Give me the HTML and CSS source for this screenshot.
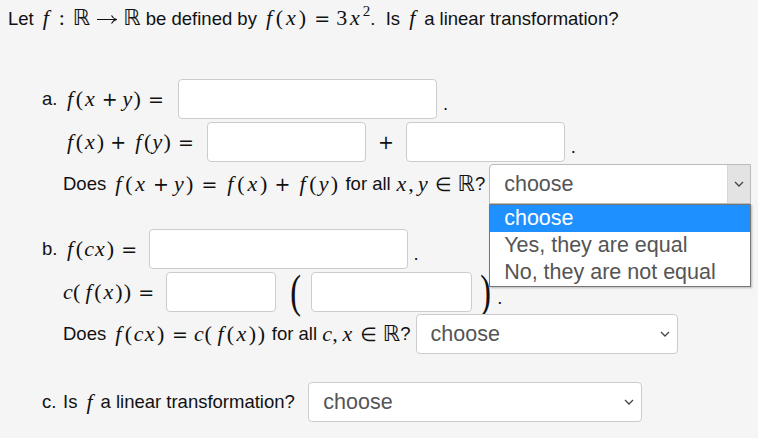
FILE: index.html
```html
<!DOCTYPE html>
<html lang="en">
  <head>
    <meta charset="UTF-8" />
    <title>Linear transformation</title>
    <link rel="stylesheet" href="styles.css">
  </head>
  <body>
    <p class="intro">
      Let&nbsp;<span class="m"><i class="f">f</i><span class="rel colon">:</span><span class="bb">ℝ</span><svg class="arr" width="20" height="10" viewBox="0 0 20 10" aria-label="→"><path d="M0 5.5 H18.5 M14.5 1.5 Q16 4.5 19.5 5.5 Q16 6.5 14.5 9.5" fill="none" stroke="#111" stroke-width="1.1"/></svg><span class="bb">ℝ</span></span>&nbsp;be defined by&nbsp;<span class="m wide"><i class="f">f</i>(<i>x</i>)<span class="rel">=</span>3<i>x</i><sup>2</sup></span>.&nbsp; Is&nbsp;<span class="m wide"><i class="f">f</i></span>&nbsp;a linear transformation?
    </p>

    <!-- part a -->
    <div class="part part-a">
      <div class="label">a.</div>
      <div class="lines">
        <div class="row">
          <span class="m"><i class="f">f</i>(<i>x</i><span class="bin">+</span><i class="y">y</i>)<span class="rel">=</span></span>
          <span class="box w-259 gap-a1"></span><span class="dot">.</span>
        </div>
        <div class="row">
          <span class="m"><i class="f">f</i>(<i>x</i>)<span class="bin">+</span><i class="f">f</i>(<i class="y">y</i>)<span class="rel">=</span></span>
          <span class="box w-159 gap-a2"></span>
          <span class="m bin plus">+</span>
          <span class="box w-159"></span><span class="dot">.</span>
        </div>
        <div class="row">
          Does&nbsp;<span class="m wide"><i class="f">f</i>(<i>x</i><span class="bin">+</span><i class="y">y</i>)<span class="rel">=</span><i class="f">f</i>(<i>x</i>)<span class="bin">+</span><i class="f">f</i>(<i class="y">y</i>)</span>&nbsp;for all&nbsp;<span class="m"><i>x</i><span class="comma">,</span><i class="y">y</i><span class="rel">∈</span><span class="bb">ℝ</span></span>?
          <div class="select open w-262 gap-s1">
            <span class="select-text">choose</span>
            <span class="arrow">
              <svg width="10" height="6" viewBox="0 0 10 6"><path d="M1 1 L5 5 L9 1" fill="none" stroke="#444" stroke-width="1.3"/></svg>
            </span>
            <ul class="options">
              <li class="picked">choose</li>
              <li>Yes, they are equal</li>
              <li>No, they are not equal</li>
            </ul>
          </div>
        </div>
      </div>
    </div>

    <!-- part b -->
    <div class="part part-b">
      <div class="label">b.</div>
      <div class="lines">
        <div class="row">
          <span class="m"><i class="f">f</i>(<i class="c">c</i><i>x</i>)<span class="rel">=</span></span>
          <span class="box w-259 gap-b1"></span><span class="dot">.</span>
        </div>
        <div class="row">
          <span class="m"><i class="c">c</i>(<i class="f">f</i>(<i>x</i>))<span class="rel">=</span></span>
          <span class="box w-110 gap-b2"></span>
          <span class="paren left">(</span>
          <span class="box w-161"></span>
          <span class="paren right">)</span><span class="dot low">.</span>
        </div>
        <div class="row">
          Does&nbsp;<span class="m wider"><i class="f">f</i>(<i class="c">c</i><i>x</i>)<span class="rel">=</span><i class="c">c</i>(<i class="f">f</i>(<i>x</i>))</span>&nbsp;for all&nbsp;<span class="m"><i class="c">c</i><span class="comma">,</span><i>x</i><span class="rel">∈</span><span class="bb">ℝ</span></span>?
          <div class="select w-262 gap-s2">
            <span class="select-text">choose</span>
            <span class="arrow">
              <svg width="10" height="6" viewBox="0 0 10 6"><path d="M1 1 L5 5 L9 1" fill="none" stroke="#444" stroke-width="1.3"/></svg>
            </span>
          </div>
        </div>
      </div>
    </div>

    <!-- part c -->
    <div class="part part-c">
      <div class="label">c.</div>
      <div class="lines">
        <div class="row">
          Is&nbsp;<span class="m"><i class="f">f</i></span>&nbsp;a linear transformation?
          <div class="select w-334 gap-s3">
            <span class="select-text">choose</span>
            <span class="arrow">
              <svg width="10" height="6" viewBox="0 0 10 6"><path d="M1 1 L5 5 L9 1" fill="none" stroke="#444" stroke-width="1.3"/></svg>
            </span>
          </div>
        </div>
      </div>
    </div>
  </body>
</html>
```

FILE: styles.css
```css
body {
  margin: 0;
  padding: 0;
  background-color: #f5f5f5;
  font-family: "Liberation Sans", Arial, sans-serif;
  font-size: 18.5px;
  color: #111;
}

.intro {
  margin: 0;
  padding: 6px 8px 0 8px;
  height: 40px;
  line-height: 24px;
  white-space: nowrap;
}

/* math */
.m {
  font-family: "Liberation Serif", "DejaVu Serif", serif;
  font-size: 22px;
  letter-spacing: 1.2px;
  white-space: nowrap;
}

.m.wide {
  letter-spacing: 2.2px;
}

.m.wider {
  letter-spacing: 1.7px;
}

.m i {
  font-style: italic;
  padding: 0 0.7px;
}

.m i.f {
  padding: 0 1.5px 0 4px;
}

.m i.y {
  padding: 0;
}

.m i.c {
  padding: 0;
  margin-right: -1px;
}

.m sup {
  font-size: 15px;
  vertical-align: 9px;
  line-height: 0;
  letter-spacing: 0;
}

.rel,
.bin {
  font-family: "DejaVu Sans", sans-serif;
  font-size: 19px;
  letter-spacing: 0;
}

.rel {
  margin: 0 6px;
}

.bin {
  margin: 0 5px;
}

.rel.colon {
  font-family: "Liberation Serif", serif;
  font-size: 22px;
  margin: 0 8px 0 7px;
}

.arr {
  margin: 0 6px 0 7px;
  vertical-align: 1px;
}

.comma {
  margin-right: 3px;
}

.bb {
  font-family: "DejaVu Sans", sans-serif;
  font-size: 22px;
  letter-spacing: 0;
}

/* parts */
.part {
  display: flex;
  padding-left: 42px;
}

.part-a {
  margin-top: 33px;
}

.part-b {
  margin-top: 25px;
}

.part-c {
  margin-top: 28px;
}

.label {
  width: 21px;
  height: 40px;
  line-height: 40px;
}

.lines {
  display: flex;
  flex-direction: column;
  gap: 2.5px;
}

.row {
  display: flex;
  align-items: center;
  height: 40px;
  white-space: nowrap;
}

.box {
  display: inline-block;
  height: 40px;
  box-sizing: border-box;
  background: #fff;
  border: 1px solid #ccc;
  border-radius: 4px;
}

.w-259 { width: 259px; }
.w-159 { width: 159px; }
.w-161 { width: 161px; }
.w-110 { width: 110px; }
.w-262 { width: 262px; }
.w-334 { width: 334px; }

.gap-a1 { margin-left: 8px; }
.gap-a2 { margin-left: 7px; }
.gap-b1 { margin-left: 5.5px; }
.gap-b2 { margin-left: 5.5px; }
.gap-s1 { margin-left: 4px; }
.gap-s2 { margin-left: 5px; }
.gap-s3 { margin-left: 13.5px; }

.dot {
  margin-left: 6px;
  padding-top: 10px;
}

.dot.low {
  margin-left: 4px;
  padding-top: 12px;
}

.plus {
  margin: 0 12px;
}

.paren {
  font-family: "Liberation Serif", serif;
  font-size: 46px;
  line-height: 40px;
  transform: scaleX(0.7);
}

.paren.left {
  margin: 0 8px 0 12px;
}

.paren.right {
  margin: 0 0 0 6px;
}

/* selects */
.select {
  position: relative;
  display: flex;
  align-items: center;
  justify-content: space-between;
  height: 40px;
  box-sizing: border-box;
  padding-left: 14px;
  background: #fff;
  border: 1px solid #ccc;
  border-radius: 4px;
  font-size: 21.5px;
  color: #555;
}

.arrow {
  display: flex;
  align-items: center;
  justify-content: center;
  width: 22px;
  height: 100%;
  margin-right: 1px;
}

.select.open {
  border-color: #bbb;
  border-radius: 4px 0 0 0;
}

.select.open .arrow {
  background: #e3e3e3;
  border-left: 1px solid #d6d6d6;
  margin-right: 0;
}

.options {
  position: absolute;
  left: -1px;
  right: -1px;
  top: 39px;
  margin: 0;
  padding: 0;
  list-style: none;
  background: #fff;
  border: 1px solid #767676;
  box-shadow: 1px 1px 2px rgba(0, 0, 0, 0.25);
  z-index: 5;
}

.options li {
  height: 27px;
  line-height: 27px;
  padding-left: 14px;
  color: #555;
}

.options li.picked {
  background: #1e90ff;
  color: #fff;
}
```
